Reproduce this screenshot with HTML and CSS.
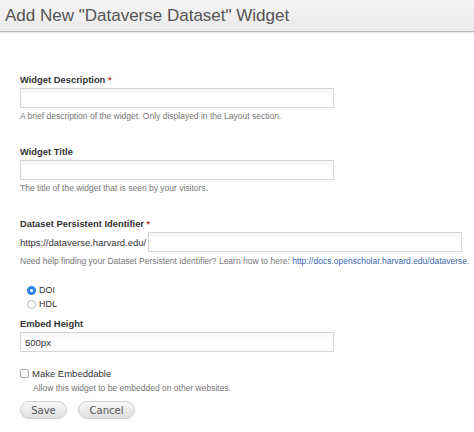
FILE: index.html
```html
<!DOCTYPE html>
<html>
<head>
<meta charset="utf-8">
<link rel="stylesheet" href="styles.css">
</head>
<body>
<div class="header"><h1 class="title">Add New "Dataverse Dataset" Widget</h1></div>
<form class="form">
  <div class="field">
    <label class="label">Widget Description <span class="req">*</span></label>
    <div class="input"></div>
    <div class="help">A brief description of the widget. Only displayed in the Layout section.</div>
  </div>
  <div class="field">
    <label class="label">Widget Title</label>
    <div class="input"></div>
    <div class="help">The title of the widget that is seen by your visitors.</div>
  </div>
  <div class="field field-pid">
    <label class="label">Dataset Persistent Identifier <span class="req">*</span></label>
    <div class="prefix-row"><span class="prefix">https://dataverse.harvard.edu/</span><div class="input input-wide"></div></div>
    <div class="help">Need help finding your Dataset Persistent Identifier? Learn how to here: <a class="link">http://docs.openscholar.harvard.edu/dataverse.</a></div>
  </div>
  <div class="radios">
    <div class="radio-row"><span class="radio radio-on"></span><span class="radio-text">DOI</span></div>
    <div class="radio-row"><span class="radio"></span><span class="radio-text">HDL</span></div>
  </div>
  <div class="field field-embed">
    <label class="label">Embed Height</label>
    <div class="input"><span class="value">500px</span></div>
  </div>
  <div class="check-row"><span class="checkbox"></span><span class="check-text">Make Embeddable</span></div>
  <div class="check-help">Allow this widget to be embedded on other websites.</div>
  <div class="buttons"><span class="btn btn-save">Save</span><span class="btn btn-cancel">Cancel</span></div>
</form>
</body>
</html>
```
FILE: styles.css
```css
html, body { margin: 0; padding: 0; background: #fff; }
body { font-family: "Liberation Sans", Arial, sans-serif; color: #333; }
.header {
  height: 32px;
  background: linear-gradient(#f4f4f4, #ebebeb);
  border-bottom: 1px solid #b9b9b9;
  box-shadow: 0 1px 1px rgba(0,0,0,0.08);
  display: flex;
  align-items: center;
  box-sizing: border-box;
}
.title {
  margin: 0 0 0 5px;
  font-size: 17px;
  font-weight: normal;
  color: #555;
  line-height: 22px;
}
.form { display: block; padding: 42px 0 0 20px; }
.field { margin-bottom: 24px; }
.label {
  display: block;
  font-size: 9.4px;
  font-weight: bold;
  line-height: 12px;
  height: 12px;
  margin-bottom: 2px;
  color: #333;
}
.req { color: #c0392b; }
.input {
  box-sizing: border-box;
  width: 314px;
  height: 20px;
  border: 1px solid #d6d6d6;
  background: linear-gradient(#f6f6f6, #fff 40%);
  display: flex;
  align-items: center;
}
.value { font-size: 9.5px; color: #333; padding-left: 4px; }
.help {
  margin-top: 2px;
  font-size: 8.5px;
  line-height: 12px;
  color: #777;
  white-space: nowrap;
}
.link { color: #3a66a8; text-decoration: none; }
.prefix-row { display: flex; align-items: center; gap: 2px; }
.prefix { font-size: 9.5px; color: #333; white-space: nowrap; }
.input-wide { width: 314px; }
.field-pid { margin-bottom: 16px; }
.field-pid .help { margin-top: 3px; }
.radios { padding-left: 7px; margin-bottom: 7px; }
.radio-row { display: flex; align-items: center; height: 14px; }
.radio {
  box-sizing: border-box;
  width: 9px; height: 9px;
  border-radius: 50%;
  border: 1px solid #b5b5b5;
  background: #fff;
  margin-right: 3px;
}
.radio-on {
  border: 3px solid #2f82e6;
  background: #fff;
}
.radio-text { font-size: 9px; color: #333; }
.field-embed { margin-bottom: 15px; }
.check-row { display: flex; align-items: center; height: 12px; }
.checkbox {
  box-sizing: border-box;
  width: 9px; height: 9px;
  border: 1px solid #aaa;
  border-radius: 2px;
  background: #fff;
  margin-right: 3px;
}
.check-text { font-size: 9.5px; color: #333; }
.check-help { padding-left: 13px; margin-top: 3px; font-size: 8.5px; line-height: 12px; color: #777; }
.buttons { display: flex; gap: 11px; margin-top: 7px; }
.btn {
  box-sizing: border-box;
  height: 18px;
  border-radius: 9px;
  border: 1px solid #cfcfcf;
  background: linear-gradient(#f8f8f8, #dedede);
  font-family: "DejaVu Sans", sans-serif;
  font-size: 10px;
  color: #555;
  display: flex;
  align-items: center;
  justify-content: center;
}
.btn-save { width: 47px; }
.btn-cancel { width: 57px; }
```
